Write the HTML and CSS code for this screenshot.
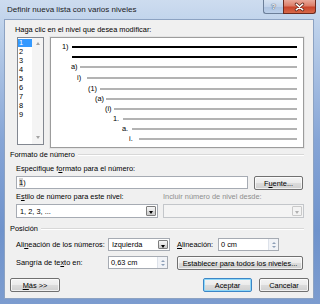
FILE: index.html
```html
<!DOCTYPE html>
<html lang="es">
<head>
  <meta charset="UTF-8">
  <title>Definir nueva lista con varios niveles</title>
  <link rel="stylesheet" href="styles.css">
</head>
<body>

<div class="window">
  <div class="titlebar">
    <span class="title">Definir nueva lista con varios niveles</span>
    <div class="caption-btns">
      <span class="cap-btn help">?</span>
      <span class="cap-btn close">
        <svg width="33" height="14" viewBox="0 0 33 14">
          <path d="M13 4 L20 10 M20 4 L13 10" stroke="#5a1c10" stroke-width="3.2" stroke-linecap="round"/>
          <path d="M13 4 L20 10 M20 4 L13 10" stroke="#fff" stroke-width="1.6" stroke-linecap="round"/>
        </svg>
      </span>
    </div>
  </div>

  <div class="client">
    <div class="hint">Haga clic en el nivel que desea modificar:</div>

    <div class="levels">
      <div class="listbox">
        <ul class="items">
          <li class="selected">1</li>
          <li>2</li>
          <li>3</li>
          <li>4</li>
          <li>5</li>
          <li>6</li>
          <li>7</li>
          <li>8</li>
          <li>9</li>
        </ul>
        <div class="vscroll">
          <span class="arr up"></span>
          <span class="arr down"></span>
        </div>
      </div>

      <div class="preview">
        <div class="prow lv1"><span class="num">1)</span><span class="bar dark"></span></div>
        <div class="prow lv2"><span class="num"></span><span class="bar dark"></span></div>
        <div class="prow lv3"><span class="num">a)</span><span class="bar"></span></div>
        <div class="prow lv4"><span class="num">i)</span><span class="bar"></span></div>
        <div class="prow lv5"><span class="num">(1)</span><span class="bar"></span></div>
        <div class="prow lv6"><span class="num">(a)</span><span class="bar"></span></div>
        <div class="prow lv7"><span class="num">(i)</span><span class="bar"></span></div>
        <div class="prow lv8"><span class="num">1.</span><span class="bar"></span></div>
        <div class="prow lv9"><span class="num">a.</span><span class="bar"></span></div>
        <div class="prow lv10"><span class="num">i.</span><span class="bar"></span></div>
      </div>
    </div>

    <div class="group">Formato de número</div>

    <div class="field-label">Especifique f<u>o</u>rmato para el número:</div>
    <div class="format-row">
      <div class="textbox format-input"><span class="field-shade">1</span>)</div>
      <button class="btn fuente">F<u>u</u>ente...</button>
    </div>

    <div class="style-grid">
      <div class="cell-label">E<u>s</u>tilo de número para este nivel:</div>
      <div class="cell-label disabled-text">Incluir número de nivel desde:</div>
      <div class="combo"><span class="combo-text">1, 2, 3, ...</span><span class="drop"></span></div>
      <div class="combo disabled"><span class="combo-text"></span><span class="drop"></span></div>
    </div>

    <div class="group pos">Posición</div>

    <div class="pos-grid">
      <div class="cell-label">Ali<u>n</u>eación de los números:</div>
      <div class="combo"><span class="combo-text">Izquierda</span><span class="drop"></span></div>
      <div class="cell-label gap-left"><u>A</u>lineación:</div>
      <div class="spin spin-a"><span class="spin-text">0 cm</span><span class="spinner"><i class="sp-up"></i><i class="sp-down"></i></span></div>

      <div class="cell-label">Sangría de te<u>x</u>to en:</div>
      <div class="spin spin-b"><span class="spin-text">0,63 cm</span><span class="spinner"><i class="sp-up"></i><i class="sp-down"></i></span></div>
      <button class="btn all-levels">Establecer para todos los niveles...</button>
    </div>

    <div class="footer">
      <button class="btn mas"><u>M</u>ás &gt;&gt;</button>
      <button class="btn default">Aceptar</button>
      <button class="btn cancel">Cancelar</button>
    </div>
  </div>
</div>

</body>
</html>
```

FILE: styles.css
```css
body {
  margin: 0;
  font-family: "Liberation Sans", Arial, sans-serif;
  font-size: 7.4px;
  color: #000;
}

.window {
  width: 320px;
  height: 304px;
  box-sizing: border-box;
  padding: 0 7px 6px 5px;
  display: flex;
  flex-direction: column;
  background: linear-gradient(to bottom, #cddcef 0, #bcd0ea 30px, #86a5d6 140px, #6f93cc 230px, #7c9ccf 100%);
}

/* title bar */

.titlebar {
  height: 20px;
  display: flex;
  align-items: flex-start;
}

.title {
  font-size: 8px;
  line-height: 8px;
  padding: 6px 0 0 2px;
  color: #1b1b1b;
}

.caption-btns {
  margin-left: auto;
  margin-right: -3px;
  display: flex;
}

.cap-btn {
  height: 14px;
  box-sizing: border-box;
  border: 1px solid #6c7f99;
  border-top: none;
  display: flex;
  align-items: center;
  justify-content: center;
}

.cap-btn.help {
  width: 20px;
  border-radius: 0 0 0 3px;
  border-right: none;
  background: linear-gradient(to bottom, #d6e2f1 0%, #c2d3ea 50%, #aec3e0 51%, #bcd0ea 100%);
  color: #fff;
  font-size: 8px;
  font-weight: bold;
  text-shadow: 0 0 1px #33445c, 0 0 1px #33445c;
}

.cap-btn.close {
  width: 33px;
  border-radius: 0 0 3px 0;
  border-color: #6b2a1f;
  background: linear-gradient(to bottom, #e9a99b 0%, #dc7e69 45%, #c9452c 55%, #d7694a 100%);
}

/* client area */

.client {
  flex: 1;
  background: #f0f0f0;
  box-shadow: 0 0 0 1px #8ca2c2;
  padding: 0 4px 0 5px;
  display: flex;
  flex-direction: column;
}

.hint {
  margin: 5px 0 0 5px;
  height: 10px;
  line-height: 10px;
}

.levels {
  display: flex;
  align-items: flex-start;
  margin-top: 2px;
  height: 111px;
}

.listbox {
  margin-left: 7px;
  width: 27px;
  height: 108px;
  box-sizing: border-box;
  border: 1px solid #828790;
  background: #fff;
  display: flex;
}

.items {
  list-style: none;
  margin: 0;
  padding: 0;
  width: 14px;
}

.items li {
  height: 9px;
  line-height: 9px;
  padding-left: 1px;
}

.items li.selected {
  background: #3399ff;
  color: #fff;
  height: 8px;
  margin-top: 1px;
  line-height: 8px;
}

.vscroll {
  flex: 1;
  background: #f4f4f4;
  display: flex;
  flex-direction: column;
  justify-content: space-between;
  align-items: center;
  padding: 4px 0 5px;
}

.arr {
  width: 0;
  height: 0;
  border-left: 2.5px solid transparent;
  border-right: 2.5px solid transparent;
}

.arr.up {
  border-bottom: 3px solid #a3a3a3;
}

.arr.down {
  border-top: 3px solid #a3a3a3;
}

/* preview of levels */

.preview {
  margin-left: 6px;
  width: 254px;
  height: 111px;
  box-sizing: border-box;
  border: 1px solid #9c9c9c;
  box-shadow: 0 0 0 1px #e4e4e4;
  background: #fff;
  padding: 4px 6px 0 0;
}

.prow {
  height: 10px;
  display: flex;
  align-items: center;
  padding-left: var(--ind);
}

.num {
  width: var(--tab);
  flex: none;
  font-size: 7.4px;
  line-height: 8px;
  color: #000;
}

.bar {
  flex: 1;
  height: 2px;
  background: #b3b3b3;
}

.bar.dark {
  background: #000;
}

.lv1 { --ind: 11px; --tab: 10px; }
.lv2 { --ind: 11px; --tab: 10px; }
.lv3 { --ind: 20px; --tab: 9px; }
.lv4 { --ind: 26px; --tab: 10px; height: 11px; }
.lv5 { --ind: 37px; --tab: 12px; height: 11px; }
.lv6 { --ind: 44px; --tab: 11px; }
.lv7 { --ind: 54px; --tab: 9px; }
.lv8 { --ind: 62px; --tab: 10px; }
.lv9 { --ind: 71px; --tab: 10px; }
.lv10 { --ind: 78px; --tab: 10px; }

/* groups */

.group {
  margin: 2px 5px 0 0;
  height: 10px;
  line-height: 10px;
  display: flex;
  align-items: center;
  gap: 3px;
}

.group::after {
  content: "";
  flex: 1;
  height: 1px;
  background: #d8d8d8;
  border-bottom: 1px solid #fff;
}

.group + .field-label {
  margin-top: 4px;
}

.field-label {
  margin-left: 6px;
  height: 10px;
  line-height: 10px;
}

.format-row {
  display: flex;
  margin: 2px 0 0 6px;
  height: 14px;
}

.textbox {
  box-sizing: border-box;
  border: 1px solid #a6abb3;
  background: #fff;
  padding-left: 2px;
}

.format-input {
  width: 232px;
  height: 13px;
  line-height: 11px;
}

.field-shade {
  background: #d4d4d4;
}

.btn {
  font-family: inherit;
  font-size: 7.4px;
  color: #000;
  height: 14px;
  padding: 0;
  box-sizing: border-box;
  border: 1px solid #707070;
  border-radius: 2px;
  background: linear-gradient(to bottom, #f3f3f3 0%, #ebebeb 50%, #dcdcdc 51%, #cfcfcf 100%);
  box-shadow: inset 0 0 0 1px rgba(255,255,255,0.7);
}

.btn.fuente {
  margin-left: 6px;
  width: 49px;
}

.style-grid {
  display: grid;
  grid-template-columns: 142px 141px;
  grid-template-rows: 10px 14px;
  column-gap: 5px;
  row-gap: 2px;
  margin: 2px 0 0 6px;
}

.cell-label {
  line-height: 10px;
  align-self: center;
  white-space: nowrap;
}

.disabled-text {
  color: #8d8d8d;
}

.combo {
  box-sizing: border-box;
  border: 1px solid #a6abb3;
  background: #fff;
  display: flex;
  align-items: center;
  padding: 1px;
}

.combo-text {
  flex: 1;
  padding-left: 2px;
}

.drop {
  width: 10px;
  align-self: stretch;
  box-sizing: border-box;
  border: 1px solid #7d7d7d;
  border-radius: 1px;
  background: linear-gradient(to bottom, #f5f5f5 0%, #e6e6e6 50%, #d7d7d7 51%, #cfcfcf 100%);
  position: relative;
}

.drop::after {
  content: "";
  position: absolute;
  left: 2px;
  top: 4px;
  border-left: 2.5px solid transparent;
  border-right: 2.5px solid transparent;
  border-top: 3px solid #000;
}

.combo.disabled {
  background: #f4f4f4;
  border-color: #c3c6ca;
}

.combo.disabled .drop {
  border-color: #c9c9c9;
  background: #f3f3f3;
}

.combo.disabled .drop::after {
  border-top-color: #b0b0b0;
}

/* position */

.group.pos {
  margin-top: 6px;
}

.pos-grid {
  display: grid;
  grid-template-columns: 92px 62px 48px 85px;
  grid-template-rows: 13px 14px;
  row-gap: 5px;
  margin: 4px 0 0 6px;
}

.gap-left {
  padding-left: 7px;
}

.spin {
  box-sizing: border-box;
  border: 1px solid #a6abb3;
  background: #fff;
  display: flex;
  align-items: center;
}

.spin-a {
  width: 61px;
}

.spin-b {
  width: 60px;
  height: 13px;
}

.spin-text {
  flex: 1;
  padding-left: 2px;
}

.spinner {
  width: 9px;
  align-self: stretch;
  display: flex;
  flex-direction: column;
  justify-content: center;
  align-items: center;
  gap: 2px;
  background: #f1f3f7;
  border-left: 1px solid #dde2ea;
}

.sp-up, .sp-down {
  width: 0;
  height: 0;
  border-left: 2px solid transparent;
  border-right: 2px solid transparent;
}

.sp-up {
  border-bottom: 2px solid #8ea0b8;
}

.sp-down {
  border-top: 2px solid #8ea0b8;
}

.btn.all-levels {
  grid-column: 3 / 5;
  margin-left: 7px;
  width: 126px;
}

.footer {
  display: flex;
  margin-top: 8px;
}

.btn.mas {
  width: 50px;
}

.btn.default {
  margin-left: auto;
  width: 49px;
  border-color: #3c86c6;
  box-shadow: inset 0 0 0 1px #8fd8f8;
}

.btn.cancel {
  margin-left: 7px;
  width: 50px;
}
```
